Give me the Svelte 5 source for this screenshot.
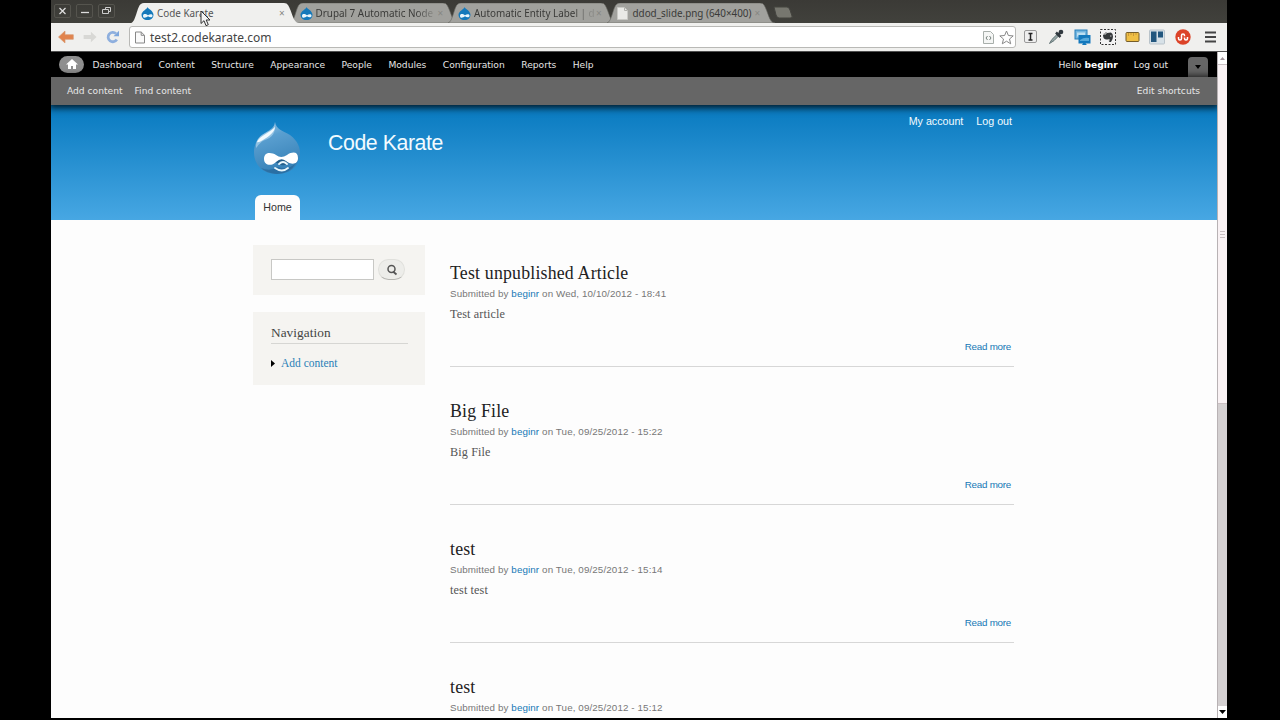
<script lang="ts">
    const menu = ['Dashboard', 'Content', 'Structure', 'Appearance', 'People', 'Modules', 'Configuration', 'Reports', 'Help'];

    const articles = [
        { title: 'Test unpublished Article', date: 'Wed, 10/10/2012 - 18:41', body: 'Test article' },
        { title: 'Big File', date: 'Tue, 09/25/2012 - 15:22', body: 'Big File' },
        { title: 'test', date: 'Tue, 09/25/2012 - 15:14', body: 'test test' },
        { title: 'test', date: 'Tue, 09/25/2012 - 15:12', body: '' }
    ];

    const tabs = [
        { title: 'Code Karate', icon: 'drop', kind: 'active' },
        { title: 'Drupal 7 Automatic Node', icon: 'drop', kind: 'fade' },
        { title: 'Automatic Entity Label | d', icon: 'drop', kind: 'fade' },
        { title: 'ddod_slide.png (640×400)', icon: 'file', kind: '' }
    ];
</script>

{#snippet file(width, height)}
    <svg {width} {height} viewBox="0 0 10 12">
        <path d="M.5.5h5.700l3.300 3.300v7.700h-9z" fill="#fafafa" stroke="#888" />
        <path d="M6.200.5v3.300h3.300" fill="none" stroke="#888" />
    </svg>
{/snippet}

<div class="screen">
    <div class="window">
        <div class="tabbar">
            <div class="controls">
                <span><svg width="15" height="12"><path d="M4.500 3l6 6M10.500 3l-6 6" stroke="#ddd" stroke-width="1.3" /></svg></span>
                <span><svg width="15" height="12"><path d="M4 7.500h8" stroke="#ddd" stroke-width="1.3" /></svg></span>
                <span><svg width="15" height="12"><path d="M6.500 4.500v-2h5v4h-2M3.500 4.500h6v4h-6z" fill="none" stroke="#ccc" /></svg></span>
            </div>
            <div class="tabs">
                {#each tabs as tab}
                    <div class="tab {tab.kind}">
                        <svg class="shape" viewBox="0 0 168 20" preserveAspectRatio="none">
                            <path d="M0 20C5 19 6 3 10 1Q11 0 13 0H153Q156 0 157 2C161 8 162 20 168 20Z" />
                        </svg>
                        <span class="favicon">
                            {#if tab.icon === 'drop'}
                                <svg width="13" height="13" viewBox="0 0 13 13">
                                    <path d="M6.500 0C7 2 12.500 3.500 12.500 8a5.800 5 0 0 1-12 0C.5 4 6 2.500 6.500 0z" fill="#1479bb" />
                                    <path d="M2 9c0-3 3-2.300 5-.8 2-1.600 5-1.400 4.500.7-.4 2-3 1.500-4.500.4C5.500 10.500 2 12 2 9z" fill="#e8f5fb" />
                                </svg>
                            {:else}
                                <svg width="11" height="13" viewBox="0 0 11 13"><path d="M.5.5h7l3 3v9H.5z" fill="#e9e9e6" stroke="#c9c9c5" /><path d="M7.500.5v3h3" fill="none" stroke="#b0b0ac" /></svg>
                            {/if}
                        </span>
                        <span class="label">{tab.title}</span>
                        <span class="close">×</span>
                    </div>
                {/each}
                <svg class="newtab" width="20" height="13"><path d="M1 1h13q2 0 3 3l2 6q1 2-2 2H6q-2 0-3-3z" fill="#77776f" stroke="#44443f" /></svg>
            </div>
            <svg class="cursor" width="11" height="17" viewBox="0 0 11 17">
                <path d="M1 1v12.500l3-2.800 2 5 2.300-1-2.100-4.700H10z" fill="#f4f4f4" stroke="#333" />
            </svg>
        </div>

        <div class="toolbar">
            <svg width="16" height="14" viewBox="0 0 16 14"><path d="M.5 7L7 1v3.700h8.300v4.600H7V13z" fill="#e1844e" stroke="#d99b73" stroke-width=".7" /></svg>
            <svg class="forward" width="14" height="14" viewBox="0 0 16 14"><path d="M15.500 7L9 1v3.700H.7v4.600H9V13z" fill="#d8d8d5" /></svg>
            <svg class="reload" width="14" height="14" viewBox="0 0 14 14">
                <path d="M10.800 9.500A4.700 4.700 0 1 1 10 3.600" fill="none" stroke="#8eafde" stroke-width="2.800" />
                <path d="M7.500 6.300H13V.8z" fill="#7ea6dc" />
            </svg>
            <div class="omnibox">
                {@render file(10, 13)}
                <span class="url">test2.codekarate.com</span>
                <svg width="11" height="13" viewBox="0 0 11 13">
                    <path d="M.5.5h7l3 3v9H.5z" fill="#f5f6f5" stroke="#a8afab" />
                    <path d="M4.500 5L3 7l1.500 2M6.500 5L8 7 6.500 9" fill="none" stroke="#77827d" />
                </svg>
                <svg class="star" width="15" height="15" viewBox="0 0 15 15"><path d="M7.500 1l1.900 4.500 4.800.4-3.700 3.100 1.200 4.800-4.200-2.600-4.200 2.600 1.200-4.800L.8 5.900l4.800-.4z" fill="#fff" stroke="#888" /></svg>
            </div>
            <div class="extensions">
                <svg width="16" height="16"><rect x="1.500" y="1.500" width="12" height="12" rx="1.500" fill="#eee" stroke="#999" /><path d="M5.500 4.500h4M5.500 11h4M7.500 4v7" stroke="#222" stroke-width="1.500" /></svg>
                <svg width="16" height="16"><path d="M1.500 14.500Q2.500 11 9 5.500l1.500 1.500Q6 12.500 1.500 14.500z" fill="#99aaa9" stroke="#657678" /><path d="M8 3.500l4.500 4.500M10 6l3-3" stroke="#30383e" stroke-width="2.500" /><circle cx="13" cy="3" r="2.300" fill="#30383e" /></svg>
                <svg width="17" height="16"><rect x="1" y="1" width="12" height="9" fill="#72b5df" stroke="#247eb9" /><path d="M3 3.500h8v4H3z" fill="#bcdff1" /><path d="M4.500 6h12v8.500h-5L13 16H8l1-1.500H4.500z" fill="#1479bd" /><path d="M6 11q4-3 9-2v3H6z" fill="#57a9da" /></svg>
                <svg width="16" height="16"><rect x=".5" y=".5" width="15" height="15" fill="#f3f3f3" stroke="#333" stroke-dasharray="2 1.500" /><path d="M3 6l3-3 1 1 4-.5q2 1 2 4T11 13H9v-2.500H6Q3 10 3 6z" fill="#34383a" /><path d="M3 5h3v-2M10 7h1.500M9 10v2.500" stroke="#ccc" fill="none" /></svg>
                <svg width="15" height="16"><rect x="1" y="3.500" width="13" height="9" rx="1" fill="#efbf45" stroke="#755d2a" /><path d="M3.500 4v3M6 4v2M8.500 4v3M11 4v2" stroke="#c9983a" /></svg>
                <svg width="16" height="16"><rect x=".5" y="1" width="15" height="14" rx="1" fill="#d7e1e7" stroke="#b9c3ca" /><rect x="2" y="2.500" width="5.500" height="10.500" fill="#23577e" /><rect x="9" y="2.500" width="5" height="6" fill="#23577e" /></svg>
                <svg width="16" height="16"><circle cx="8" cy="8" r="7.700" fill="#dc4328" /><path d="M3.500 8v1.500q0 1.500 1.500 1.500t1.500-1.500v-3Q6.500 5 8 5t1.500 1.500v.8M9.500 8.500v1q0 1.500 1.500 1.500t1.500-1.500V8" fill="none" stroke="#fff" stroke-width="1.500" /></svg>
                <svg class="wrench" width="11" height="12"><path d="M0 1.500h11M0 6h11M0 10.500h11" stroke="#454545" stroke-width="2.200" /></svg>
            </div>
        </div>

        <div class="viewport">
            <div class="page">
                <nav class="admin">
                    <span class="home"><svg width="12" height="11"><path d="M6 0L0 5.500h2V10h3V7h2v3h3V5.500h2z" fill="#fff" /></svg></span>
                    {#each menu as item}
                        <span>{item}</span>
                    {/each}
                    <div class="user">
                        <span>Hello <b>beginr</b></span>
                        <span>Log out</span>
                        <span class="toggle"><svg width="6" height="4"><path d="M0 0h6L3 4z" fill="#000" /></svg></span>
                    </div>
                </nav>
                <div class="shortcuts">
                    <span>Add content</span>
                    <span>Find content</span>
                    <span class="edit">Edit shortcuts</span>
                </div>
                <header>
                    <div class="inner">
                        <div class="brand">
                            <svg class="logo" width="48" height="54" viewBox="0 0 48 54">
                                <defs>
                                    <linearGradient id="drop" x1="0" y1="0" x2=".3" y2="1">
                                        <stop offset="0" stop-color="#a0ccec" />
                                        <stop offset=".35" stop-color="#5a9fd0" />
                                        <stop offset="1" stop-color="#3782b8" />
                                    </linearGradient>
                                </defs>
                                <path d="M22 0C23 7 30 9 37 13C45 19 47.500 26 47 33C45 46 36 52 24 52C10 52 1 43 1 30C1 22 5 15 12 11C18 7 21 6 22 0Z" fill="url(#drop)" />
                                <path d="M22 3C23 10 19 16 12 18C7 20 5 24 3 26C2 17 8 13 14 10C18 8 21 7 22 3Z" fill="#b5d9f0" opacity=".6" />
                                <path d="M22 5C22 10 15 15 10 18Q5 21 4 20C6 14 17 11 22 5Z" fill="#f1faff" />
                                <path d="M25 45Q35 49 43 41Q37 52 24 52Q13 51 8 46Q17 50 25 45Z" fill="#1c5c8f" opacity=".5" />
                                <path d="M22 40Q28 33 35 40Q34 44 28 43Z" fill="#235f8b" />
                                <path d="M11 37C11 30 18 30 23 33Q28 37 34 33C40 29 45 30 45 36C45 43 38 43 33 39Q28 35 23 40C18 45 11 43 11 37Z" fill="#fff" />
                                <path d="M26 42Q30 38 34 42M22 46Q29 51 35 46" fill="none" stroke="#e9f7fc" stroke-width="1.800" stroke-linecap="round" />
                            </svg>
                            <h1>Code Karate</h1>
                            <div class="account"><span>My account</span><span>Log out</span></div>
                        </div>
                        <div class="hometab">Home</div>
                    </div>
                </header>
                <div class="inner columns">
                    <aside>
                        <div class="block search">
                            <input type="text" aria-label="Search" />
                            <button aria-label="Search"><svg width="12" height="12"><circle cx="5.500" cy="5" r="3.500" fill="none" stroke="#555" stroke-width="1.500" /><path d="M7 7.500l3.500 3" stroke="#555" stroke-width="1.800" /></svg></button>
                        </div>
                        <div class="block navigation">
                            <h2>Navigation</h2>
                            <div class="leaf"><svg width="4" height="7"><path d="M0 0l4 3.500L0 7z" /></svg><span>Add content</span></div>
                        </div>
                    </aside>
                    <main>
                        {#each articles as article}
                            <article>
                                <h2>{article.title}</h2>
                                <div class="meta">Submitted by <b>beginr</b> on {article.date}</div>
                                {#if article.body}
                                    <p>{article.body}</p>
                                    <div class="more">Read more</div>
                                {/if}
                            </article>
                        {/each}
                    </main>
                </div>
            </div>
            <div class="scrollbar">
                <div class="arrow"><svg width="5" height="4"><path d="M0 4h5L2.500 1z" fill="#a1959a" /></svg></div>
                <div class="thumb"><i></i><i></i><i></i></div>
                <div class="track"></div>
                <div class="arrow"><svg width="7" height="4"><path d="M0 0h7L3.500 4z" /></svg></div>
            </div>
        </div>
    </div>
</div>

<style>
    :global(body) {
        margin: 0;
        background: #000;
    }

    svg {
        display: block;
        flex: none;
    }

    h1, h2, p {
        margin: 0;
        font-weight: normal;
    }

    .screen {
        box-sizing: border-box;
        height: 720px;
        padding: 0 53px 2px 51px;
        overflow: hidden;
        background: #000;
    }

    .window {
        display: flex;
        flex-direction: column;
        height: 718px;
    }

    .tabbar {
        position: relative;
        display: flex;
        flex: none;
        height: 23px;
        background: linear-gradient(#3b3a36, #41413c);
    }

    .controls {
        display: flex;
        gap: 5px;
        width: 80px;
        padding: 4px 0 0 3px;
        box-sizing: border-box;
    }

    .controls span {
        box-sizing: border-box;
        width: 17px;
        height: 14px;
        border: 1px solid #55544e;
        border-radius: 2px;
    }

    .tabs {
        display: flex;
        padding-top: 3px;
    }

    .tab {
        position: relative;
        display: flex;
        align-items: center;
        width: 168px;
        height: 20px;
        margin-right: -9.500px;
        padding-left: 10px;
        box-sizing: border-box;
        font: 9.900px "Noto Sans", sans-serif;
        color: #3a3a38;
        white-space: nowrap;
    }

    .tab.active {
        z-index: 1;
        color: #555;
    }

    .shape {
        position: absolute;
        inset: 0;
        width: 100%;
        height: 100%;
        fill: #a1a19d;
        stroke: #65655f;
        stroke-width: .6;
    }

    .active .shape {
        fill: #f0f0ee;
        stroke: none;
    }

    .favicon, .label, .close {
        position: relative;
    }

    .favicon {
        width: 16px;
    }

    .label {
        width: 122px;
    }

    .fade .label {
        mask-image: linear-gradient(90deg, #000 82%, rgba(0, 0, 0, .2) 96%);
    }

    .close {
        width: 7px;
        color: #878783;
        font-size: 10px;
    }

    .newtab {
        margin: 3px 0 0 8px;
    }

    .cursor {
        position: absolute;
        left: 149px;
        top: 10px;
        z-index: 2;
    }

    .toolbar {
        display: flex;
        flex: none;
        align-items: center;
        height: 28px;
        padding-left: 7px;
        background: #f0f0ee;
        border-bottom: 1px solid #505050;
    }

    .forward {
        margin-left: 9px;
    }

    .reload {
        margin-left: 9px;
    }

    .omnibox {
        display: flex;
        align-items: center;
        box-sizing: border-box;
        width: 887px;
        height: 22px;
        margin-left: 9px;
        padding: 0 1px 0 5px;
        border: 1px solid #b9b9b6;
        border-radius: 3px;
        background: #fff;
    }

    .url {
        flex: 1;
        margin-left: 5px;
        font: 12px "Noto Sans", sans-serif;
        color: #444;
    }

    .star {
        margin-left: 5px;
    }

    .extensions {
        display: flex;
        align-items: center;
        gap: 9.300px;
        margin-left: 7px;
    }

    .wrench {
        margin-left: 5px;
    }

    .viewport {
        display: flex;
        flex: 1;
        min-height: 0;
    }

    .page {
        width: 1166px;
        padding-top: 1px;
        box-sizing: border-box;
        overflow: hidden;
        background: linear-gradient(#000 1px, #fdfdfd 1px);
    }

    .admin, .shortcuts {
        display: flex;
        font: 9.150px "DejaVu Sans", sans-serif;
        color: #e6e6e6;
        white-space: nowrap;
    }

    .admin {
        gap: 16.500px;
        height: 24px;
        padding-left: 8px;
        line-height: 24px;
        background: #000;
    }

    .home {
        display: flex;
        align-items: center;
        justify-content: center;
        width: 25px;
        height: 17px;
        margin: 3px -8px 0 0;
        border-radius: 9px;
        background: #8f8f8f;
    }

    .user {
        display: flex;
        gap: 16px;
        margin-left: auto;
        padding-right: 9px;
    }

    .user b {
        color: #fff;
    }

    .toggle {
        display: flex;
        align-items: center;
        justify-content: center;
        width: 20px;
        height: 20px;
        margin: 4px 0 0 4px;
        border-radius: 4px 4px 0 0;
        background: #666;
    }

    .shortcuts {
        position: relative;
        gap: 12px;
        height: 28px;
        padding: 0 17px 0 16px;
        line-height: 28px;
        background: #666;
        box-shadow: 0 1px 7px 2px rgba(0, 0, 0, .8);
    }

    .edit {
        margin-left: auto;
    }

    header {
        height: 115px;
        background: linear-gradient(#0779bf, #47a7e3);
    }

    .inner {
        width: 761px;
        margin-left: 202px;
    }

    .brand {
        display: flex;
        height: 90px;
        font-family: "Liberation Sans", sans-serif;
        color: #f2fbff;
    }

    .logo {
        margin-top: 17px;
    }

    h1 {
        margin: 26px 0 0 27px;
        font-size: 21.300px;
        line-height: 24px;
        letter-spacing: -.42px;
    }

    .account {
        display: flex;
        gap: 13px;
        margin-left: auto;
        padding: 9px 2px 0 0;
        font-size: 10.700px;
        line-height: 14px;
    }

    .hometab {
        width: 45px;
        height: 25px;
        margin-left: 2px;
        border-radius: 6px 6px 0 0;
        background: #fdfdfd;
        font: 10.700px/25px "Liberation Sans", sans-serif;
        color: #333;
        text-align: center;
    }

    .columns {
        display: flex;
        justify-content: space-between;
        font-family: Georgia, "Liberation Serif", serif;
    }

    aside {
        width: 172px;
        padding-top: 25px;
    }

    .block {
        box-sizing: border-box;
        background: #f5f4f1;
    }

    .search {
        display: flex;
        align-items: flex-start;
        gap: 4px;
        height: 50px;
        padding: 14px 18px;
    }

    input {
        box-sizing: border-box;
        width: 103px;
        height: 21px;
        border: 1px solid #c8c8c5;
        background: #fff;
    }

    button {
        display: flex;
        align-items: center;
        justify-content: center;
        box-sizing: border-box;
        width: 27px;
        height: 21px;
        padding: 0;
        border: 1px solid #e0e0dc;
        border-bottom-color: #b6b6b2;
        border-radius: 11px;
        background: #ededea;
    }

    .navigation {
        height: 73px;
        margin-top: 17px;
        padding: 12px 17px 0 18px;
    }

    .navigation h2 {
        height: 19px;
        border-bottom: 1px solid #d6d6d3;
        font-size: 13.300px;
        line-height: 18px;
        letter-spacing: .05px;
        color: #444;
    }

    .leaf {
        display: flex;
        align-items: center;
        gap: 6px;
        margin-top: 12px;
        font-size: 11.500px;
        line-height: 15px;
        color: #2a80b7;
    }

    main {
        width: 564px;
        padding-top: 8.600px;
    }

    article {
        box-sizing: border-box;
        height: 138.300px;
        padding-top: 34px;
        border-bottom: 1px solid #d7d7d7;
    }

    article h2 {
        font-size: 17.800px;
        line-height: 21px;
        letter-spacing: .2px;
        color: #222;
    }

    .meta {
        margin-top: 3px;
        font: 9.800px/14px "Liberation Sans", sans-serif;
        letter-spacing: .11px;
        color: #777;
    }

    .meta b {
        font-weight: normal;
        color: #1678b6;
    }

    p {
        margin-top: 5px;
        font-size: 12.200px;
        line-height: 16px;
        letter-spacing: .12px;
        color: #555;
    }

    .more {
        margin: 18px 3px 0 0;
        font: 9.800px/14px "Liberation Sans", sans-serif;
        letter-spacing: -.25px;
        color: #1678b6;
        text-align: right;
    }

    .scrollbar {
        display: flex;
        flex-direction: column;
        box-sizing: border-box;
        width: 10px;
        border-left: 1px solid #b8b2b4;
        background: #f9f2f4;
    }

    .arrow {
        display: flex;
        align-items: center;
        justify-content: center;
        height: 12px;
        background: #fff;
    }

    .thumb {
        display: flex;
        flex-direction: column;
        align-items: center;
        justify-content: center;
        gap: 2px;
        height: 338px;
        border: solid #c9bfc2;
        border-width: 1px 0;
    }

    .thumb i {
        width: 5px;
        height: 1px;
        background: #c9bfc2;
    }

    .track {
        flex: 1;
        background: #d4d0d1;
    }
</style>
